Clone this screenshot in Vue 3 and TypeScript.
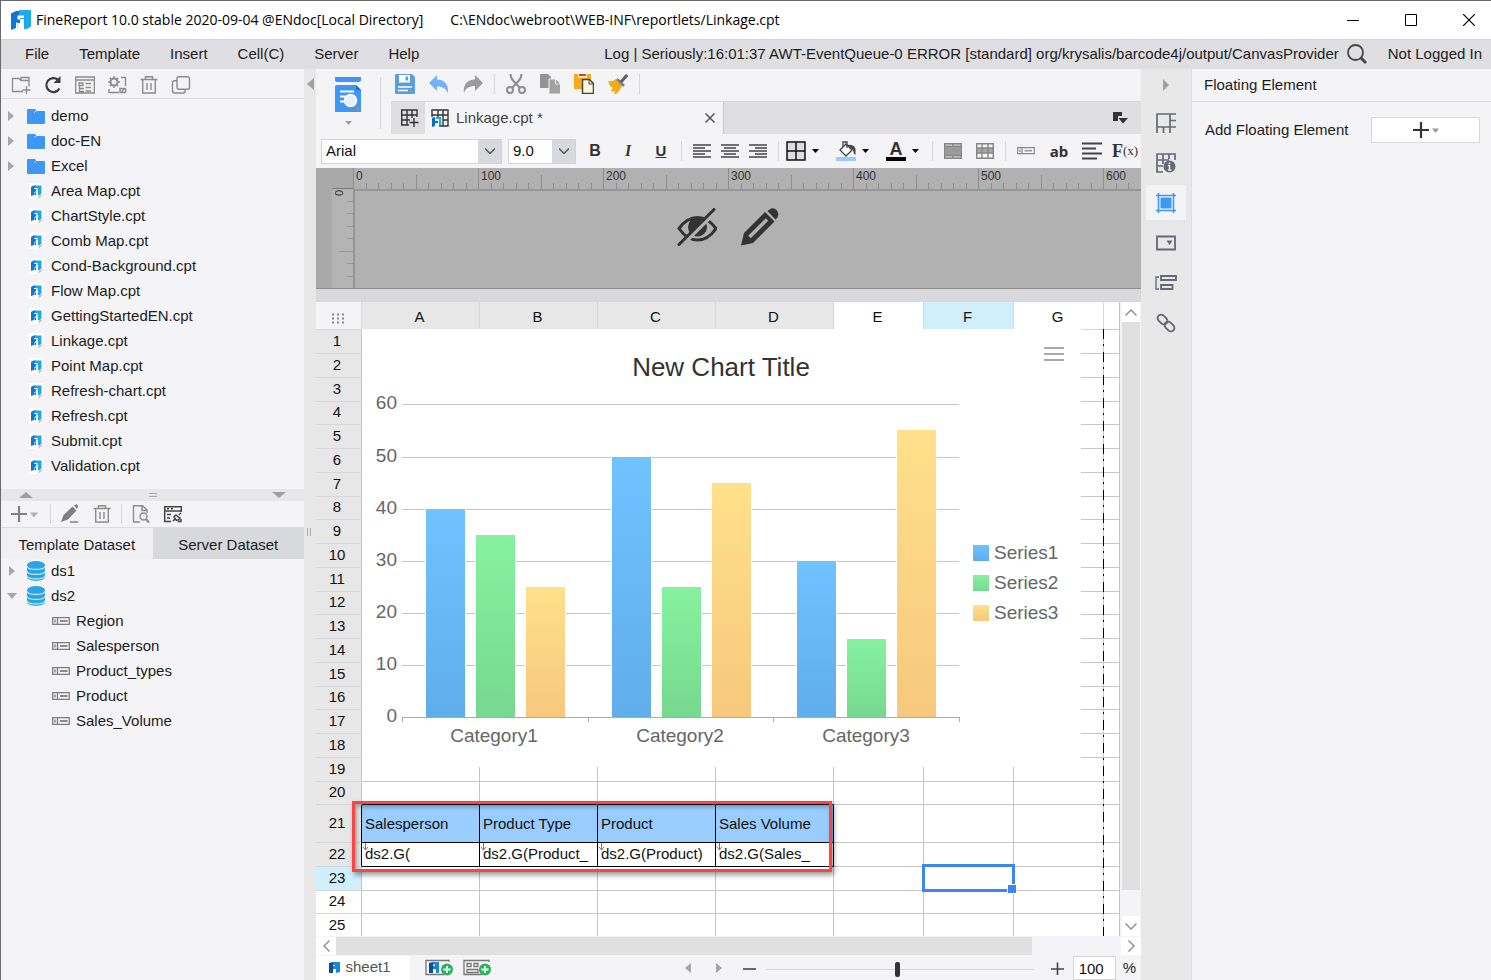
<script setup lang="ts">
import { ref } from 'vue'

const menus = ['File', 'Template', 'Insert', 'Cell(C)', 'Server', 'Help']
const folders = ['demo', 'doc-EN', 'Excel']
const files = [
  'Area Map.cpt', 'ChartStyle.cpt', 'Comb Map.cpt', 'Cond-Background.cpt', 'Flow Map.cpt',
  'GettingStartedEN.cpt', 'Linkage.cpt', 'Point Map.cpt', 'Refresh-chart.cpt', 'Refresh.cpt',
  'Submit.cpt', 'Validation.cpt',
]
const fields = ['Region', 'Salesperson', 'Product_types', 'Product', 'Sales_Volume']

const columns = ['A', 'B', 'C', 'D', 'E', 'F', 'G']
const rows = Array.from({ length: 25 }, (_, i) => i + 1)
const cells: Record<string, string> = {
  A21: 'Salesperson', B21: 'Product Type', C21: 'Product', D21: 'Sales Volume',
  A22: 'ds2.G(', B22: 'ds2.G(Product_', C22: 'ds2.G(Product)', D22: 'ds2.G(Sales_',
}
const inReport = (col: string, row: number) => `${col}${row}` in cells

const zoom = ref(49)
const zoomText = ref('100')
const fontName = ref('Arial')
const fontSize = ref('9.0')

const ticks = Array.from({ length: 140 }, (_, i) => ({
  x: Math.round(i * 12.5),
  h: i % 10 === 0 ? 21 : i % 5 === 0 ? 14 : 6,
}))
const rulerLabels = Array.from({ length: 7 }, (_, i) => ({ x: i * 125 + 3, t: String(i * 100) }))
const sideTicks = Array.from({ length: 7 }, (_, i) => ({
  y: Math.round((i + 1) * 12.5),
  w: i === 4 ? 14 : 6,
}))

const base = 717
const toY = (v: number) => Math.round(base - v * 5.21)
const axis = [0, 10, 20, 30, 40, 50, 60]
const categories = [
  { name: 'Category1', x: 426, mid: 494, values: [40, 35, 25] },
  { name: 'Category2', x: 612, mid: 680, values: [50, 25, 45] },
  { name: 'Category3', x: 797, mid: 866, values: [30, 15, 55] },
]
const series = ['Series1', 'Series2', 'Series3']
</script>

<template>
  <div class="window">
    <header class="titlebar">
      <svg class="logo" width="20" height="20" viewBox="0 0 20 20">
        <path d="M0 3.500 5 1h4v18H6.500v-6.500H5V18l-5 2z" fill="#0a78d4" />
        <path d="M8 0h12v16.500L16 19h-3V9H8z" fill="#1fa9e8" />
        <path d="M6.500 5.500h6.500V8H9v1.500H6.500zM6.500 13H13v6H6.500z" fill="#fff" />
      </svg>
      <h1>FineReport 10.0 stable 2020-09-04 @ENdoc[Local Directory]</h1>
      <span class="path">C:\ENdoc\webroot\WEB-INF\reportlets/Linkage.cpt</span>
      <div class="winbtns">
        <button aria-label="Minimize"><svg width="12" height="12"><path d="M0 6.500h12" stroke="#000" /></svg></button>
        <button aria-label="Maximize"><svg width="12" height="12"><path d="M.5.5h11v11H.5z" fill="none" stroke="#000" /></svg></button>
        <button aria-label="Close"><svg width="12" height="12"><path d="M0 0l12 12M12 0 0 12" stroke="#000" stroke-width="1.200" /></svg></button>
      </div>
    </header>

    <nav class="menubar">
      <button v-for="m in menus" :key="m">{{ m }}</button>
      <span class="log">Log | Seriously:16:01:37 AWT-EventQueue-0 ERROR [standard] org/krysalis/barcode4j/output/CanvasProvider</span>
      <button class="search" aria-label="Search">
        <svg width="20" height="20"><circle cx="8.500" cy="8.500" r="7.500" fill="none" stroke="#444" stroke-width="1.800" /><path d="M14 14l5 5" stroke="#444" stroke-width="2.800" /></svg>
      </button>
      <button>Not Logged In</button>
    </nav>

    <main class="body">
      <aside class="left">
        <div class="filebar">
          <button aria-label="New folder"><svg width="20" height="20" fill="none" stroke="#8c8c8c" stroke-width="1.300"><path d="M12 16.500H1.500v-13H8l2 2h8v6M10 5.500V2.500h8v3M15.500 11v8M11.500 15h8" /></svg></button>
          <button aria-label="Refresh"><svg width="20" height="20" fill="none" stroke="#3c3c3c" stroke-width="2.200"><path d="M16.500 13.500A7 7 0 1 1 15 4.800" /><path d="M17.500 1v7h-7z" fill="#3c3c3c" stroke="none" /></svg></button>
          <button aria-label="Show in explorer"><svg width="20" height="20" fill="none" stroke="#8c8c8c" stroke-width="1.300"><path d="M.7 2h18.600v16H.7zM.7 5h18.600M4 8h4v2.500H4zM4.500 10.500v6H9M4.500 13.500H9M10.500 8.500H16M10.500 12.500H16M10.500 16H16" /></svg></button>
          <button aria-label="Settings"><svg width="20" height="20" fill="none" stroke="#8c8c8c" stroke-width="1.400"><circle cx="7" cy="7" r="3.500" stroke-width="2" /><path d="M7 1v2.500M7 10.500V13M1 7h2.500M10.500 7H13M2.800 2.800l1.700 1.700M9.500 9.500l1.700 1.700M2.800 11.200l1.700-1.700M9.500 4.500l1.700-1.700M14 2.500h4.500V11M2 14v3.500h10M13 17.500v-4h5.500v4zM14.500 16.500l3-3" /></svg></button>
          <button aria-label="Delete"><svg width="20" height="20" fill="none" stroke="#8c8c8c" stroke-width="1.400"><path d="M1.500 4.500h17M6.500 4V1.700h7V4M3.700 5v13h12.600V5M8 8v7M12 8v7" /></svg></button>
          <button aria-label="Copy"><svg width="20" height="20" fill="none" stroke="#8c8c8c" stroke-width="1.400"><rect x="6" y="1.700" width="12.500" height="12.500" rx="2" /><path d="M6 5.700H3.500q-2 0-2 2V16q0 2 2 2h8.700q2 0 2-2v-1.500" /></svg></button>
        </div>
        <ul class="tree files">
          <li v-for="f in folders" :key="f">
            <svg class="tw" width="8" height="10"><path d="M1 0l6 5-6 5z" fill="#a6a6a6" /></svg>
            <svg class="ic" width="20" height="16"><path d="M1 2q0-1 1-1h7l2 2h7q1 0 1 1v11q0 1-1 1H2q-1 0-1-1z" fill="#3e97f5" /><path d="M8.500 4.500 11 2h7" stroke="#f4f4f6" stroke-width="1" fill="none" /></svg>
            <span>{{ f }}</span>
          </li>
          <li v-for="f in files" :key="f">
            <i class="tw stub"></i>
            <svg class="ic" width="20" height="20"><path d="M3 2h14v11l-4 5H3z" fill="#fff" /><path d="M12.500 13.500H17L12.500 18z" fill="#c6c6c6" /><path d="M5 6l2.500-1.500H10V14H8.500v-3H8v3l-3 1z" fill="#0a78d4" /><path d="M9 4.500h6.500v8L13.500 14H12V8.500H9z" fill="#1fa9e8" /><path d="M8 7.500h3.500M9 11h3" stroke="#fff" stroke-width="1" /></svg>
            <span>{{ f }}</span>
          </li>
        </ul>
        <div class="hsplit">
          <svg width="14" height="6"><path d="M0 6l7-6 7 6z" fill="#a0a0a0" /></svg>
          <svg width="8" height="6"><path d="M0 1.500h8M0 4.500h8" stroke="#aaa" /></svg>
          <svg width="14" height="6"><path d="M0 0l7 6 7-6z" fill="#a0a0a0" /></svg>
        </div>
        <div class="databar">
          <button class="add" aria-label="Add dataset"><svg width="28" height="20"><path d="M1 10h16M9 2v16" stroke="#808080" stroke-width="2.200" /><path d="M20 8.500h8l-4 5z" fill="#b0b0b0" /></svg></button>
          <i class="sep"></i>
          <button aria-label="Edit"><svg width="20" height="20"><path d="M1 18l2.500-7L12.500 2.500l4 4L8 15.500zM14 1.500l1.500-1q1-.5 2 .5t.5 2l-1 2z" fill="#808080" /><path d="M10 18h8" stroke="#808080" stroke-width="1.500" /></svg></button>
          <button aria-label="Delete dataset"><svg width="20" height="20" fill="none" stroke="#8c8c8c" stroke-width="1.400"><path d="M1.500 4.500h17M6.500 4V1.700h7V4M3.700 5v13h12.600V5M8 8v7M12 8v7" /></svg></button>
          <i class="sep"></i>
          <button aria-label="Preview"><svg width="20" height="20" fill="none" stroke="#8c8c8c" stroke-width="1.400"><path d="M9 18H2.500V1.700h9L16 6v3M11 1.700V6.500h5" /><circle cx="12.500" cy="12.500" r="3.500" /><path d="M15 15l3 3.500" stroke-width="2" /></svg></button>
          <button aria-label="Connection"><svg width="20" height="20" fill="none" stroke="#444" stroke-width="1.500"><path d="M8 17.500H1.700V2.700h16.600V8M1.700 7h16.600M4 10.500h4M4 14h3M4 4.800h2M8 4.800h2" /><path d="M10 17l2-2M16 11l2-2M11 13q2-3 3-1l3 2q-2 3-4 2z M15 17.500h3V15" /></svg></button>
        </div>
        <div class="dstabs">
          <button class="on">Template Dataset</button>
          <button>Server Dataset</button>
        </div>
        <ul class="tree">
          <li v-for="(d, i) in ['ds1', 'ds2']" :key="d">
            <svg class="tw" width="10" height="10"><path :d="i ? 'M0 2h10L5 8z' : 'M2 0l6 5-6 5z'" fill="#a6a6a6" /></svg>
            <svg class="ic" width="20" height="20"><path d="M1 4v12c0 5 18 5 18 0V4z" fill="#2ba5e0" /><ellipse cx="10" cy="4" rx="9" ry="4" fill="#2ba5e0" /><path d="M1 5c0 4.500 18 4.500 18 0M1 10c0 4.500 18 4.500 18 0M1 14.500c0 4.500 18 4.500 18 0" fill="none" stroke="#c8e8f8" stroke-width="1.100" /></svg>
            <span>{{ d }}</span>
          </li>
          <li v-for="f in fields" :key="f" class="field">
            <svg width="18" height="8"><path d="M.7.7h16.600v6.600H.7zM5.500 1v6M3 2.500v3" fill="none" stroke="#7e7e7e" stroke-width="1.300" /><path d="M8 4h7.500" stroke="#8a8a8a" stroke-width="2" /></svg>
            <span>{{ f }}</span>
          </li>
        </ul>
      </aside>

      <div class="gutter">
        <svg width="7" height="12"><path d="M7 0v12L0 6z" fill="#a0a0a0" /></svg>
        <svg class="grip" width="5" height="8"><path d="M.5 0v8M3.500 0v8" stroke="#a8a8a8" /></svg>
      </div>

      <section class="center">
        <div class="top">
          <button class="preview" aria-label="Preview template">
            <svg width="28" height="50" viewBox="0 0 28 50">
              <path d="M1 0h26v3q0 2-2 2H3Q1 5 1 3z" fill="#3e97f5" /><path d="M1 10q0-2 2-2h19l5 5v22H1z" fill="#3e97f5" />
              <path d="M22 8l5 5h-5z" fill="#2a6fc0" /><path d="M6 14.500h14M6 19.500h6M6 24.500h5" stroke="#fff" stroke-width="2" />
              <path d="M20 28l5 5" stroke="#8c8c8c" stroke-width="3" /><circle cx="16.500" cy="23.500" r="6" fill="#e4f1fd" stroke="#fff" stroke-width="1.500" />
              <path d="M11 44h7l-3.500 4z" fill="#a0a0a0" />
            </svg>
          </button>
          <i class="tallsep"></i>
          <div class="topright">
            <div class="quick">
              <button aria-label="Save"><svg width="20" height="20"><path d="M1 0h16l3 3v16q0 1-1 1H1q-1 0-1-1V1q0-1 1-1z" fill="#5b9fe0" /><path d="M4 1h11v7.500H4z" fill="#fff" /><path d="M10.500 2.500h2.500v4h-2.500z" fill="#5b9fe0" /><path d="M3 13h14M3 16.500h10" stroke="#fff" stroke-width="1.500" /></svg></button>
              <button aria-label="Undo"><svg width="20" height="20"><path d="M8 1v4.500c8 0 12 6 11 14-2-5-5-7-11-7V17L0 9z" fill="#74b3f3" /></svg></button>
              <button aria-label="Redo"><svg width="20" height="20"><path d="M12 1v4.500C4 5.500 0 11 1 19c2-5 5-7 11-7v5l8-8z" fill="#9c9c9c" /></svg></button>
              <i class="sep"></i>
              <button aria-label="Cut"><svg width="20" height="20" fill="none" stroke="#8e8e8e" stroke-width="2"><path d="M4.500 0q0 4 3 7l6.500 7M15.500 0q0 4-3 7L6 14" /><circle cx="4" cy="16" r="3" /><circle cx="16" cy="16" r="3" /></svg></button>
              <button aria-label="Copy cells"><svg width="20" height="20"><path d="M0 0h8l3 3v11H0z" fill="#949494" /><path d="M9 5h7l4.500 4.500V20H9z" fill="#a2a2a2" stroke="#f4f4f6" /><path d="M15.500 5v5H20" fill="none" stroke="#e8e8e8" /></svg></button>
              <button aria-label="Paste"><svg width="20" height="20"><path d="M0 0h17v15H0z" fill="#f5ab18" /><path d="M4 0h9v4H4z" fill="#f8e5c0" /><path d="M5 0h7v2H5z" fill="#c4501c" /><path d="M8.500 5.500h7l4 4v10h-11z" fill="#fef6dc" stroke="#454545" stroke-width="1.500" /><path d="M15 5.500V10h4.500" fill="none" stroke="#454545" /></svg></button>
              <button aria-label="Format brush"><svg width="20" height="20"><path d="M0 7q5 1 8-2l6 6q-1 5-6 9H6l1-3-3 1-1-2 2-2-3-2z" fill="#f5ab18" /><path d="M9 5l7 7" stroke="#77808a" stroke-width="2.500" /><path d="M13 8l6-7" stroke="#5a5f68" stroke-width="3" /></svg></button>
              <i class="sep"></i>
            </div>
            <div class="tabs">
              <button class="newtab" aria-label="New template"><svg width="20" height="20" fill="none" stroke="#333" stroke-width="1.400"><path d="M9 17H1.700V2H17v7M1.700 7H17M1.700 12H10M7 2v15M12 2v8M14 10v9M9.500 14.500h9" /></svg></button>
              <div class="tab">
                <svg width="18" height="18" fill="none"><path d="M7 1v8M12 1v16M1 6h16M12 11h5M1 8V1h16v16H8" stroke="#333" stroke-width="1.400" /><path d="M1 9l3-1v9l-3 1zM4 12h3v2H4z" fill="#0a6cc4" /><path d="M5 8h5v8H8v-6H5z" fill="#22a8e6" /></svg>
                <span>Linkage.cpt *</span>
                <button aria-label="Close tab"><svg width="10" height="10"><path d="M.5.5l9 9M9.500.5l-9 9" stroke="#555" stroke-width="1.500" /></svg></button>
              </div>
              <button class="more" aria-label="Tab list"><svg width="16" height="14"><path d="M1 1h9v4H6v5H1z" fill="#333" /><path d="M6.500 7H16l-5 5.500z" fill="#333" /></svg></button>
            </div>
          </div>
        </div>

        <div class="format">
          <label class="pick font"><select v-model="fontName" aria-label="Font"><option>Arial</option></select><span><svg width="10" height="6"><path d="M0 .5l5 5 5-5" fill="none" stroke="#555" stroke-width="1.500" /></svg></span></label>
          <label class="pick size"><select v-model="fontSize" aria-label="Font size"><option>9.0</option></select><span><svg width="10" height="6"><path d="M0 .5l5 5 5-5" fill="none" stroke="#555" stroke-width="1.500" /></svg></span></label>
          <div class="grp biu">
            <button class="b">B</button><button class="i">I</button><button class="u">U</button>
          </div>
          <i class="sep"></i>
          <div class="grp al">
            <button aria-label="Align left"><svg width="20" height="20"><path d="M1 4h18M1 7h12M1 10h18M1 13h12M1 16h18" stroke="#444" stroke-width="1.400" /></svg></button>
            <button aria-label="Align center"><svg width="20" height="20"><path d="M1 4h18M4 7h12M1 10h18M4 13h12M1 16h18" stroke="#444" stroke-width="1.400" /></svg></button>
            <button aria-label="Align right"><svg width="20" height="20"><path d="M1 4h18M7 7h12M1 10h18M7 13h12M1 16h18" stroke="#444" stroke-width="1.400" /></svg></button>
          </div>
          <i class="sep"></i>
          <div class="grp drop">
            <button aria-label="Borders"><svg width="20" height="20"><path d="M1 1h18v18H1zM10 1v18M1 10h18" fill="#dcdce2" stroke="#111" stroke-width="1.500" /></svg><svg width="8" height="5"><path d="M1 0h7L4.500 4z" /></svg></button>
            <button aria-label="Fill color"><svg width="20" height="20"><path d="M0 16h20v4H0z" fill="#97cbff" /><path d="M4 9l6-6 6 6-6 6z" fill="#fff" stroke="#444" stroke-width="1.300" /><path d="M7 6V1h4v6" fill="none" stroke="#444" stroke-width="1.300" /><path d="M11 4q7-1 8.500 4v6q-2-1-2.500-5z" fill="#444" /></svg><svg width="8" height="5"><path d="M1 0h7L4.500 4z" /></svg></button>
            <button class="fcolor" aria-label="Font color"><span>A</span><svg width="8" height="5"><path d="M1 0h7L4.500 4z" /></svg></button>
          </div>
          <i class="sep"></i>
          <div class="grp mg">
            <button aria-label="Merge cells"><svg width="20" height="20"><path d="M1.700 2.700h16.600v14.600H1.700zM2 5.500h16M2 14.500h16M10 3v3M10 14v3" fill="#d0d0d0" stroke="#868686" stroke-width="1.400" /><path d="M2 6h16v8H2z" fill="#9a9a9a" /></svg></button>
            <button aria-label="Unmerge cells"><svg width="20" height="20"><path d="M2 7h16v5H2z" fill="#a8a8a8" /><path d="M1.700 2.700h16.600v14.600H1.700zM2 7h16M2 12h16M7 3v14M13 3v14" fill="none" stroke="#868686" stroke-width="1.400" /></svg></button>
          </div>
          <i class="sep"></i>
          <div class="grp biu">
            <button aria-label="Insert column"><svg width="20" height="20"><path d="M1.700 6.700h16.600v6H1.700zM6 7v6M4 8.500v2.500" fill="none" stroke="#8a8a8a" stroke-width="1.200" /><path d="M8.500 9.700h7.500" stroke="#999" stroke-width="1.500" /></svg></button>
            <button class="ab">ab</button>
            <button aria-label="Rich text"><svg width="20" height="20"><path d="M0 2.500h20M0 7.500h14M0 12.500h20M0 17.500h15" stroke="#444" stroke-width="1.800" /></svg></button>
            <button class="fx">F<small>(x)</small></button>
          </div>
        </div>

        <div class="params">
          <div class="vruler">
            <svg width="37" height="121">
              <path d="M16 21h21v100H16z" fill="#b4b4b4" /><path d="M16 20.500h21" stroke="#7c7c7c" />
              <path v-for="t in sideTicks" :key="t.y" :d="`M${37 - t.w} ${t.y + 20}.500h${t.w}`" stroke="#989898" />
              <text transform="translate(27 28) rotate(-90)" font-size="11" fill="#333">0</text>
            </svg>
          </div>
          <div class="canvas">
            <svg class="hruler" height="21">
              <path v-for="t in ticks" :key="t.x" :d="`M${t.x}.500 ${21 - t.h}v${t.h}`" stroke="#8e8e8e" />
              <text v-for="l in rulerLabels" :key="l.x" :x="l.x" y="12" font-size="12" fill="#333">{{ l.t }}</text>
            </svg>
            <div class="tools">
              <button aria-label="Hide parameter panel"><svg width="40" height="38" viewBox="0 0 40 38">
                <path d="M2 20.500Q10 9.500 20.500 9.500T39 20.500Q31 32 20.500 32T2 20.500z" fill="none" stroke="#333" stroke-width="3" /><circle cx="20.500" cy="19" r="9.500" fill="#333" /><path d="M5 37.500 39.500 3" stroke="#b1b1b1" stroke-width="3.500" /><path d="M2 36.500 37 1.500" stroke="#333" stroke-width="3" stroke-linecap="round" />
              </svg></button>
              <button aria-label="Edit parameter panel"><svg width="40" height="38" viewBox="0 0 40 38">
                <path d="M1 37.500l3-12.500L25 4l9.500 9.500L13 35z" fill="#333" /><path d="M9.500 29 27 11.500" stroke="#b1b1b1" stroke-width="3.500" /><path d="M27.500 3l2-1.500q4-2.500 7 .5t1 7.500l-2 2z" fill="#333" />
              </svg></button>
            </div>
          </div>
        </div>
        <div class="band"></div>

        <div class="sheetarea">
          <div class="sheet">
            <table>
              <colgroup><col class="rh" /><col v-for="c in columns" :key="c" :class="'ABCD'.includes(c) ? 'wide' : 'narrow'" /><col /></colgroup>
              <thead>
                <tr>
                  <th class="corner"><svg width="14" height="12"><path d="M1 1.500h12M1 5.500h12M1 9.500h12" stroke="#888" stroke-width="2" stroke-dasharray="2 3" /></svg></th>
                  <th v-for="c in columns" :key="c" :class="{ used: 'ABCD'.includes(c), cur: c === 'F' }">{{ c }}</th>
                  <th class="rest"></th>
                </tr>
              </thead>
              <tbody>
                <tr v-for="r in rows" :key="r" :class="{ tall: r === 21 }">
                  <th :class="{ used: r < 23, cur: r === 23, edge: r === 21 || r === 22 }">{{ r }}</th>
                  <td v-for="c in columns" :key="c" :class="{ rep: inReport(c, r), head: inReport(c, r) && r === 21, over: r === 20 && inReport(c, 21) }">
                    <svg v-if="inReport(c, r) && r === 22" class="exp" width="7" height="8"><path d="M3.500 0v7M1 4l2.500 3L6 4" fill="none" stroke="#777" /></svg>{{ cells[`${c}${r}`] }}
                    <i v-if="c === 'F' && r === 23" class="sel"></i>
                  </td>
                  <td></td>
                </tr>
              </tbody>
            </table>
            <svg class="pagebreak" width="1" height="607"><path d="M.5 0v607" stroke="#000" stroke-dasharray="10 5 2 6" /></svg>
            <svg class="chart" width="719" height="438" viewBox="362 329 719 438">
              <defs>
                <linearGradient id="g0" x2="0" y2="1"><stop offset="0" stop-color="#6fc3ff" /><stop offset="1" stop-color="#60adeb" /></linearGradient>
                <linearGradient id="g1" x2="0" y2="1"><stop offset="0" stop-color="#85f2a0" /><stop offset="1" stop-color="#77d88f" /></linearGradient>
                <linearGradient id="g2" x2="0" y2="1"><stop offset="0" stop-color="#ffe08b" /><stop offset="1" stop-color="#f6c87c" /></linearGradient>
              </defs>
              <path d="M362 329h719v438H362z" fill="#fff" />
              <text x="721" y="376" font-size="26" fill="#333" text-anchor="middle">New Chart Title</text>
              <path d="M1044 348h20M1044 354h20M1044 360h20" stroke="#aaa" stroke-width="2" />
              <g v-for="v in axis" :key="v">
                <path :d="`M402 ${toY(v)}.500h557`" :stroke="v ? '#c6c6c6' : '#aaa'" />
                <text x="397" :y="toY(v) + 5" font-size="19" fill="#666" text-anchor="end">{{ v }}</text>
              </g>
              <path d="M402.500 717v5M588.500 717v5M773.500 717v5M959.500 717v5" stroke="#aaa" />
              <g v-for="c in categories" :key="c.name">
                <g v-for="(v, i) in c.values" :key="i">
                  <rect :x="c.x + i * 50 - 1" :y="toY(v) - 1" width="41" :height="base - toY(v) + 1" fill="#fff" />
                  <rect :x="c.x + i * 50" :y="toY(v)" width="39" :height="base - toY(v)" :fill="`url(#g${i})`" />
                </g>
                <text :x="c.mid" y="742" font-size="19" fill="#666" text-anchor="middle">{{ c.name }}</text>
              </g>
              <g v-for="(s, i) in series" :key="s">
                <rect x="973" :y="545 + i * 30" width="16" height="16" :fill="`url(#g${i})`" />
                <text x="994" :y="559 + i * 30" font-size="19" fill="#666">{{ s }}</text>
              </g>
            </svg>
            <div class="mark"></div>
          </div>
          <div class="vscroll">
            <button aria-label="Scroll up"><svg width="12" height="7"><path d="M.5 6.500 6 1l5.500 5.500" fill="none" stroke="#888" stroke-width="1.300" /></svg></button>
            <i class="vthumb"></i><i class="vrest"></i>
            <button aria-label="Scroll down"><svg width="12" height="7"><path d="M.5.500 6 6l5.500-5.500" fill="none" stroke="#888" stroke-width="1.300" /></svg></button>
          </div>
        </div>
        <div class="hscroll">
          <button aria-label="Scroll left"><svg width="7" height="12"><path d="M6.500.500 1 6l5.500 5.500" fill="none" stroke="#888" stroke-width="1.300" /></svg></button>
          <i class="hthumb"></i><i class="hrest"></i>
          <button aria-label="Scroll right"><svg width="7" height="12"><path d="M.5.500 6 6 .5 11.500" fill="none" stroke="#888" stroke-width="1.300" /></svg></button>
        </div>
        <footer class="status">
          <button class="sheettab"><svg width="11" height="11"><path d="M0 1l4-1v11l-4 0z" fill="#0b4f94" /><path d="M4 0h7v10l-4 1V7H4z" fill="#1a86cc" /><path d="M4 7h3v4H4zM4 3h2v1H4z" fill="#fff" /></svg>sheet1</button>
          <button aria-label="Add sheet"><svg width="28" height="18"><path d="M24 3V1.500H1v14h18" fill="none" stroke="#777" stroke-width="1.300" /><path d="M4 4l4-1v11H4z" fill="#0b4f94" /><path d="M8 3h6v11h-3v-4H8z" fill="#1a86cc" /><path d="M8 10h3v4H8zM8 5.500h2V7H8z" fill="#fff" /><circle cx="22" cy="10.500" r="6" fill="#20b858" /><path d="M18.500 10.500h7M22 7v7" stroke="#fff" stroke-width="1.800" /></svg></button>
          <button aria-label="Add form sheet"><svg width="28" height="18"><path d="M26 3V1.500H1v14h18M4 4.500h4v3H4zM11 4.500h4v3h-4zM4 10.500h11v3H4z" fill="none" stroke="#777" stroke-width="1.300" /><circle cx="22" cy="10.500" r="6" fill="#20b858" /><path d="M18.500 10.500h7M22 7v7" stroke="#fff" stroke-width="1.800" /></svg></button>
          <span class="grow"></span>
          <button class="nav" aria-label="Previous sheet"><svg width="6" height="10"><path d="M6 0v10L0 5z" fill="#a6a6a6" /></svg></button>
          <button class="nav" aria-label="Next sheet"><svg width="6" height="10"><path d="M0 0v10l6-5z" fill="#a6a6a6" /></svg></button>
          <button aria-label="Zoom out"><svg width="14" height="14"><path d="M0 8h13" stroke="#444" stroke-width="1.600" /></svg></button>
          <input v-model="zoom" type="range" min="0" max="100" aria-label="Zoom" />
          <button class="plus" aria-label="Zoom in"><svg width="14" height="14"><path d="M0 8h13M6.500 1.500v13" stroke="#444" stroke-width="1.600" /></svg></button>
          <label><input v-model="zoomText" class="pct" type="text" aria-label="Zoom percent" />%</label>
        </footer>
      </section>

      <nav class="strip">
        <button class="fold" aria-label="Collapse"><svg width="6" height="12"><path d="M0 0v12l6-6z" fill="#a0a0a0" /></svg></button>
        <button aria-label="Cell element"><svg width="20" height="20" fill="none" stroke="#666873" stroke-width="1.700"><path d="M20 1H1v19M1 14h19M14 1v19M14 7.500h6M7.500 14v6" /></svg></button>
        <button aria-label="Cell attributes"><svg width="20" height="20" fill="none" stroke="#666873" stroke-width="1.700"><path d="M19 7V1H1v18h6M1 7h12M7 1v10M13 1v5M1 13h6" /><circle cx="13.500" cy="13.500" r="6" fill="#666873" stroke="none" /><path d="M13.500 12.500v4M12 12.500h2M12 17h3.500M13.500 9.500v1.500" stroke="#e8e8e8" stroke-width="1.500" /></svg></button>
        <button class="on" aria-label="Floating element"><svg width="20" height="20" fill="none" stroke="#3e97f5"><path d="M0 2.500h20M0 17.500h20M2.500 0v20M17.500 0v20" stroke-width="1.600" /><path d="M5 5h10v10H5z" fill="#3e97f5" /></svg></button>
        <button aria-label="Widget settings"><svg width="20" height="20"><path d="M1 3.500h18v13H1z" fill="none" stroke="#666873" stroke-width="1.800" /><path d="M10.500 7.500h6l-3 4.500z" fill="#666873" /></svg></button>
        <button aria-label="Condition attributes"><svg width="22" height="20" fill="none" stroke="#666873" stroke-width="1.800"><path d="M4 4H1v12h3" stroke-width="1.300" /><path d="M6 3h15v4H6zM6 12h11.500v4H6z" /></svg></button>
        <button aria-label="Hyperlink"><svg width="20" height="20" fill="none" stroke="#666873" stroke-width="1.900"><rect x="-5.500" y="-3.500" width="11" height="7" rx="3.500" transform="translate(6.500 6.500) rotate(45)" /><rect x="-5.500" y="-3.500" width="11" height="7" rx="3.500" transform="translate(13.500 13.500) rotate(45)" /></svg></button>
      </nav>

      <aside class="right">
        <h2>Floating Element</h2>
        <div class="addrow">
          <label for="addfloat">Add Floating Element</label>
          <button id="addfloat"><svg width="28" height="18"><path d="M1 9h16M9 1v16" stroke="#333" stroke-width="2.200" /><path d="M20 7.500h7l-3.500 4.500z" fill="#999" /></svg></button>
        </div>
      </aside>
    </main>
  </div>
</template>

<style>
body { margin: 0; }
</style>

<style scoped>
* { box-sizing: border-box; }
svg { display: block; flex: none; }
button { border: 0; padding: 0; margin: 0; background: none; font: inherit; color: inherit; display: flex; align-items: center; justify-content: center; flex: none; }
.window { height: 100vh; display: flex; flex-direction: column; border-left: 1px solid #6a6a6a; border-top: 1px solid #6b6868; background: #f4f4f6; font: 15px/20px "Liberation Sans", Arial, sans-serif; color: #1c1c22; overflow: hidden; white-space: nowrap; }
.sep { width: 1px; height: 20px; background: #d8d8dc; flex: none; }

.titlebar { height: 39px; flex: none; display: flex; align-items: center; background: #fff; padding-left: 10px; font: 14px/20px "Open Sans", "Noto Sans", sans-serif; color: #000; border-bottom: 1px solid #d4d4d6; }
.titlebar h1 { margin: 0 0 0 5px; font: inherit; }
.path { margin-left: 27px; }
.winbtns { margin-left: auto; display: flex; gap: 46px; padding-right: 16px; }

.menubar { height: 29px; flex: none; display: flex; align-items: center; gap: 30px; background: #dfdfe1; padding: 0 9px 2px 24px; }
.log { margin-left: auto; }
.search { margin: 0 -9px 0 -22px; }

.body { flex: 1; min-height: 0; display: flex; }
.left { width: 303px; flex: none; display: flex; flex-direction: column; }
.filebar { height: 30px; flex: none; display: flex; align-items: center; gap: 12px; padding: 3px 0 0 10px; border-bottom: 1px solid #dcdcde; }
.tree { list-style: none; margin: 0; padding: 0; }
.files { height: 390px; padding-top: 5px; }
.tree li { height: 25px; display: flex; align-items: center; padding: 0 0 2px 6px; }
.tw { width: 10px; }
.stub { height: 1px; }
.ic { margin: 0 5px 0 9px; }
.tree .field { padding-left: 51px; gap: 6px; }
.hsplit { height: 12px; flex: none; background: #e7e7e7; display: flex; align-items: center; justify-content: space-between; padding: 0 18px; }
.databar { height: 27px; flex: none; display: flex; align-items: center; gap: 12px; padding-left: 9px; border-bottom: 1px solid #dcdcde; }
.databar .sep { margin: 0 -3px; }
.add { padding-right: 3px; }
.dstabs { height: 31px; flex: none; display: flex; }
.dstabs button { flex: 1; padding-top: 3px; background: #d8d9dd; }
.dstabs .on { background: #f0f0f2; }
.gutter { width: 12px; flex: none; background: #e8e8e8; padding: 9px 0 0 3px; }
.grip { margin-top: 438px; }

.center { flex: 1; min-width: 0; display: flex; flex-direction: column; }
.top { height: 65px; flex: none; display: flex; }
.preview { width: 64px; padding-top: 1px; }
.tallsep { width: 1px; height: 52px; margin: 8px 10px 0 0; background: #d8d8dc; flex: none; }
.topright { flex: 1; min-width: 0; }
.quick { height: 32px; display: flex; align-items: center; gap: 14px; padding: 0 0 2px 4px; }
.quick .sep { margin: 0 -3px; }
.tabs { height: 33px; display: flex; background: #dfdfe1; border-top: 1px solid #d8d8da; }
.newtab { width: 34px; padding-left: 4px; }
.tab { width: 299px; flex: none; display: flex; align-items: center; padding: 0 8px 0 6px; gap: 7px; background: #f4f4f6; color: #444; border-right: 1px solid #c8c8ca; }
.tab button { margin-left: auto; }
.more { margin-left: auto; padding-right: 13px; }

.format { height: 34px; flex: none; display: flex; align-items: center; padding-left: 5px; }
.pick { display: flex; height: 25px; border: 1px solid #d4d4d8; background: #fff; }
.pick select { flex: 1; min-width: 0; appearance: none; border: 0; background: #fff; font: inherit; color: #111; padding: 0 0 0 4px; }
.pick span { width: 23px; background: #d8d9dd; display: flex; align-items: center; justify-content: center; }
.font { width: 181px; margin-right: 6px; }
.size { width: 68px; margin-right: 9px; }
.grp { display: flex; }
.grp button { width: 20px; height: 20px; color: #333; }
.format > .sep { margin: 0 10px; }
.biu { gap: 13px; }
.al { gap: 8px; }
.drop { gap: 17px; margin: 0 3px 0 -3px; }
.grp.drop button { width: 33px; gap: 5px; }
.mg { gap: 12px; }
.b { font-weight: bold; font-size: 16px; }
.i { font: italic bold 16px/20px "Liberation Serif", serif; }
.u { font-weight: bold; text-decoration: underline; }
.fcolor span { width: 20px; height: 20px; font: bold 18px/16px "Liberation Sans", sans-serif; border-bottom: 4px solid #000; text-align: center; }
.ab { font: bold 15px/20px "Noto Sans", sans-serif; }
.fx { font: bold 18px/20px "Liberation Serif", serif; }
.fx small { font-size: 13px; font-weight: normal; }

.params { height: 121px; flex: none; display: flex; background: #b1b1b1; border-bottom: 1px solid #8e8e8e; overflow: hidden; }
.vruler { width: 37px; flex: none; background: #a9a9a9; }
.canvas { flex: 1; min-width: 0; display: flex; flex-direction: column; }
.hruler { width: 100%; overflow: hidden; }
.tools { flex: 1; border-top: 2px solid #959595; border-left: 2px solid #959595; display: flex; justify-content: center; align-items: flex-start; gap: 23px; padding: 17px 39px 0 0; }
.band { height: 13px; flex: none; background: #d9d9dc; }

.sheetarea { flex: 1; min-height: 0; display: flex; }
.sheet { flex: 1; min-width: 0; position: relative; overflow: hidden; background: #fff; }
table { width: 100%; table-layout: fixed; border-collapse: separate; border-spacing: 0; color: #111; }
.rh { width: 46px; }
.wide { width: 118px; }
.narrow { width: 90px; }
th, td { padding: 0; height: 24px; line-height: 20px; border: 0 solid #c6c6c6; border-width: 0 1px 1px 0; }
th { font-weight: normal; padding: 0 3px 2px 0; }
thead th { height: 28px; padding: 3px 2px 0 0; border-color: #d6d6dc; }
.rest { border-color: #c6c6c6; }
.corner { background: #f4f4f6; }
.corner svg { margin: 4px auto 0; }
tbody th { border-bottom-color: #d6d6dc; }
.used { background: #e7e7e7; }
.cur { background: #ceeffb; }
tbody tr:nth-child(4n) > * { height: 23px; }
tbody .tall > * { height: 38px; }
td { position: relative; overflow: hidden; padding: 0 0 2px 3px; }
.rep { border-color: #000; }
.head { background: #99ccff; padding-bottom: 0; }
.over { border-bottom-color: #000; }
.edge { border-right-color: #000; }
.exp { position: absolute; left: 0; top: 0; }
td:has(.sel) { overflow: visible; }
.sel { position: absolute; inset: -3px -2px -2px -2px; border: 3px solid #3b86f0; z-index: 1; }
.sel::after { content: ""; position: absolute; right: -5px; bottom: -5px; width: 8px; height: 8px; background: #3b86f0; border: 1px solid #fff; }
.pagebreak { position: absolute; left: 787px; top: 27px; }
.chart { position: absolute; left: 46px; top: 27px; }
.mark { position: absolute; left: 36px; top: 499px; width: 480px; height: 71px; border: 3px solid #fb4444; box-shadow: 2px 3px 5px rgba(0, 0, 0, .4), inset 2px 3px 4px rgba(0, 0, 0, .3); }
.vscroll { width: 21px; flex: none; display: flex; flex-direction: column; padding: 0 1px 0 2px; background: #f4f4f6; }
.vscroll button { height: 20px; background: #fff; }
.vthumb { flex: 568; background: #e0e0e0; }
.vrest { flex: 26; }
.hscroll { height: 20px; flex: none; display: flex; padding: 1px 0; }
.hscroll button { width: 20px; background: #fff; }
.hthumb { flex: 696; background: #e0e0e0; }
.hrest { flex: 89; }
.status { height: 24px; flex: none; display: flex; align-items: center; }
.sheettab { width: 94px; height: 24px; gap: 5px; padding: 0 6px 2px 0; background: #fff; color: #555; margin-right: 15px; }
.sheettab + button { margin-right: 10px; }
.grow { flex: 1; }
.nav { margin-right: 25px; }
.nav + .nav { margin-right: 21px; }
input { font: inherit; color: #111; margin: 0; }
input[type=range] { width: 268px; height: 16px; margin: 2px 17px 0 9px; appearance: none; background: linear-gradient(#d8d8dc, #d8d8dc) center / 100% 1px no-repeat; }
input[type=range]::-webkit-slider-thumb { appearance: none; width: 5px; height: 15px; border-radius: 2px; background: #333; }
.status label { display: flex; align-items: center; gap: 7px; padding: 0 5px 0 8px; }
.pct { width: 43px; height: 24px; border: 1px solid #d4d4d8; background: #fff; padding: 0 5px; }

.strip { width: 51px; flex: none; background: #e8e8e8; border-right: 1px solid #dededf; display: flex; flex-direction: column; align-items: center; gap: 5px; }
.strip button { width: 40px; height: 35px; color: #666873; }
.strip .fold { height: 31px; }
.strip .on { background: #f4f4f6; }
.right { width: 299px; flex: none; }
.right h2 { margin: 0; height: 33px; padding: 6px 12px; font: inherit; border-bottom: 1px solid #dcdcde; }
.addrow { display: flex; align-items: center; justify-content: space-between; padding: 15px 11px 0 13px; }
.addrow button { width: 109px; height: 26px; background: #fff; border: 1px solid #d8d8dc; }
</style>
